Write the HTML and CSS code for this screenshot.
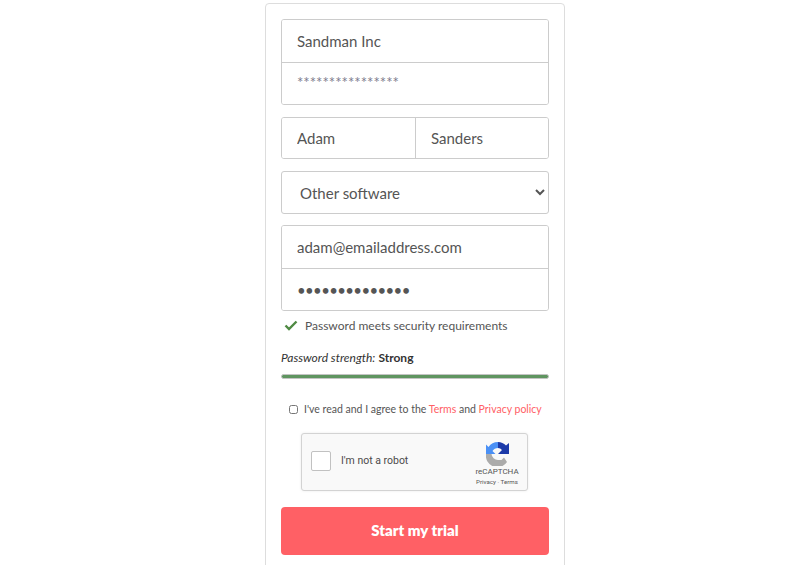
FILE: index.html
```html
<!DOCTYPE html>
<html lang="en">
<head>
<meta charset="utf-8">
<title>Start my trial</title>
<link rel="stylesheet" href="styles.css">
</head>
<body>
<form class="card">
  <div class="group">
    <input class="field tall" type="text" value="Sandman Inc">
    <div class="field tall stars">****************</div>
  </div>
  <div class="group row">
    <input class="field half" type="text" value="Adam">
    <input class="field half" type="text" value="Sanders">
  </div>
  <select class="picker"><option>Other software</option></select>
  <div class="group last">
    <input class="field tall" type="text" value="adam@emailaddress.com">
    <input class="field tall secret" type="password" value="abcdefghijklmn">
  </div>
  <div class="meets">
    <svg class="tick" width="14" height="11" viewBox="0 0 14 11"><path d="M1.500 5.500 5 9l7.500-7.500" fill="none" stroke="#4f8a43" stroke-width="2.400"/></svg>
    <span>Password meets security requirements</span>
  </div>
  <div class="strength"><em>Password strength:</em> <b>Strong</b></div>
  <div class="bar"></div>
  <label class="agree">
    <input class="box" type="checkbox">
    <span>I've read and I agree to the <a href="#">Terms</a> and <a href="#">Privacy policy</a></span>
  </label>
  <div class="captcha">
    <div class="cbox"></div>
    <div class="robot">I'm not a robot</div>
    <div class="brand">
      <svg width="23" height="24" viewBox="0 0 23 24">
        <path d="M12 0A11.500 11.500 0 0 0 2.500 5L0 2.500V12h9.500L6.500 9A6.500 6.500 0 0 1 12 6z" fill="#4a90f5"/>
        <path d="M12 0a11.500 11.500 0 0 1 8 3.500L23 1v11h-11l4-4a6 6 0 0 0-4-2z" fill="#1c3aa9"/>
        <path d="M0 12h5.500a6.500 6.500 0 0 0 6.500 6l3.500 0 2.500-2.500L21 20a11.500 11.500 0 0 1-21-8z" fill="#ababab"/>
      </svg>
      <div class="re">reCAPTCHA</div>
      <div class="terms">Privacy · Terms</div>
    </div>
  </div>
  <button class="go" type="button">Start my trial</button>
</form>
</body>
</html>
```
FILE: styles.css
```css
* { box-sizing: border-box; }
html, body { margin: 0; height: 565px; overflow: hidden; background: #fff; }
body { font-family: Lato, "Liberation Sans", sans-serif; color: #555; }
.card {
  width: 300px;
  height: 580px;
  margin: 3px 0 0 265px;
  padding: 15px 15px 0;
  border: 1px solid #ddd;
  border-radius: 4px;
  display: flex;
  flex-direction: column;
}
.group {
  display: flex;
  flex-direction: column;
  border: 1px solid #ccc;
  border-radius: 3px;
  overflow: hidden;
  margin-bottom: 12px;
}
.group.last { margin-bottom: 0; }
.group.row { flex-direction: row; height: 42px; }
.field {
  border: 0;
  outline: 0;
  padding: 0 15px;
  font: 15px Lato, sans-serif;
  color: #555;
  background: #fff;
  width: 100%;
  display: block;
}
.tall { height: 42px; }
.tall + .tall { border-top: 1px solid #ccc; }
.half { width: 50%; height: 40px; }
.half + .half { border-left: 1px solid #ccc; }
.stars { color: #7d7d8e; line-height: 39px; }
.secret { letter-spacing: -0.65px; }
.picker {
  height: 43px;
  width: 100%;
  border: 1px solid #ccc;
  border-radius: 3px;
  background: #fff;
  padding: 0 14px;
  font: 15px Lato, sans-serif;
  color: #555;
  margin-bottom: 11px;
  outline: 0;
}
.meets {
  display: flex;
  align-items: center;
  gap: 7px;
  margin: 6px 0 0 3px;
  height: 16px;
  font-size: 12px;
  color: #555;
}
.strength {
  margin-top: 17px;
  height: 16px;
  line-height: 16px;
  font-size: 12px;
  color: #333;
}
.bar {
  margin-top: 8px;
  height: 5px;
  background: #5f9560;
  border: 1px solid #c4c4c4;
  border-radius: 3px;
}
.agree {
  display: flex;
  align-items: center;
  gap: 6px;
  margin: 22px 0 0 8px;
  height: 16px;
  font-size: 10.500px;
  white-space: nowrap;
  color: #555;
}
.box { margin: 0; width: 9px; height: 9px; }
.agree a { color: #ff6065; text-decoration: none; }
.captcha {
  width: 227px;
  height: 58px;
  margin: 16px 0 0 20px;
  border: 1px solid #d3d3d3;
  border-radius: 3px;
  background: #f9f9f9;
  box-shadow: 0 0 3px rgba(0,0,0,.08);
  display: flex;
  align-items: center;
  padding: 0 7px 2px 9px;
  font-family: Roboto, sans-serif;
}
.cbox {
  width: 20px;
  height: 20px;
  border: 1px solid #c1c1c1;
  border-radius: 2px;
  background: #fff;
}
.robot { margin: -2px 0 0 10px; font-size: 10.500px; color: #4c4a4b; flex: 1; }
.brand {
  width: 46px;
  display: flex;
  flex-direction: column;
  align-items: center;
  color: #555;
  margin-top: 8px;
}
.re { font-size: 8px; line-height: 11px; }
.terms { font-size: 6.200px; line-height: 11px; white-space: nowrap; }
.go {
  margin-top: 16px;
  height: 48px;
  padding: 0 0 2px;
  border: 0;
  border-radius: 4px;
  background: #ff6065;
  color: #fff;
  font: 800 15px Lato, sans-serif;
}
```
